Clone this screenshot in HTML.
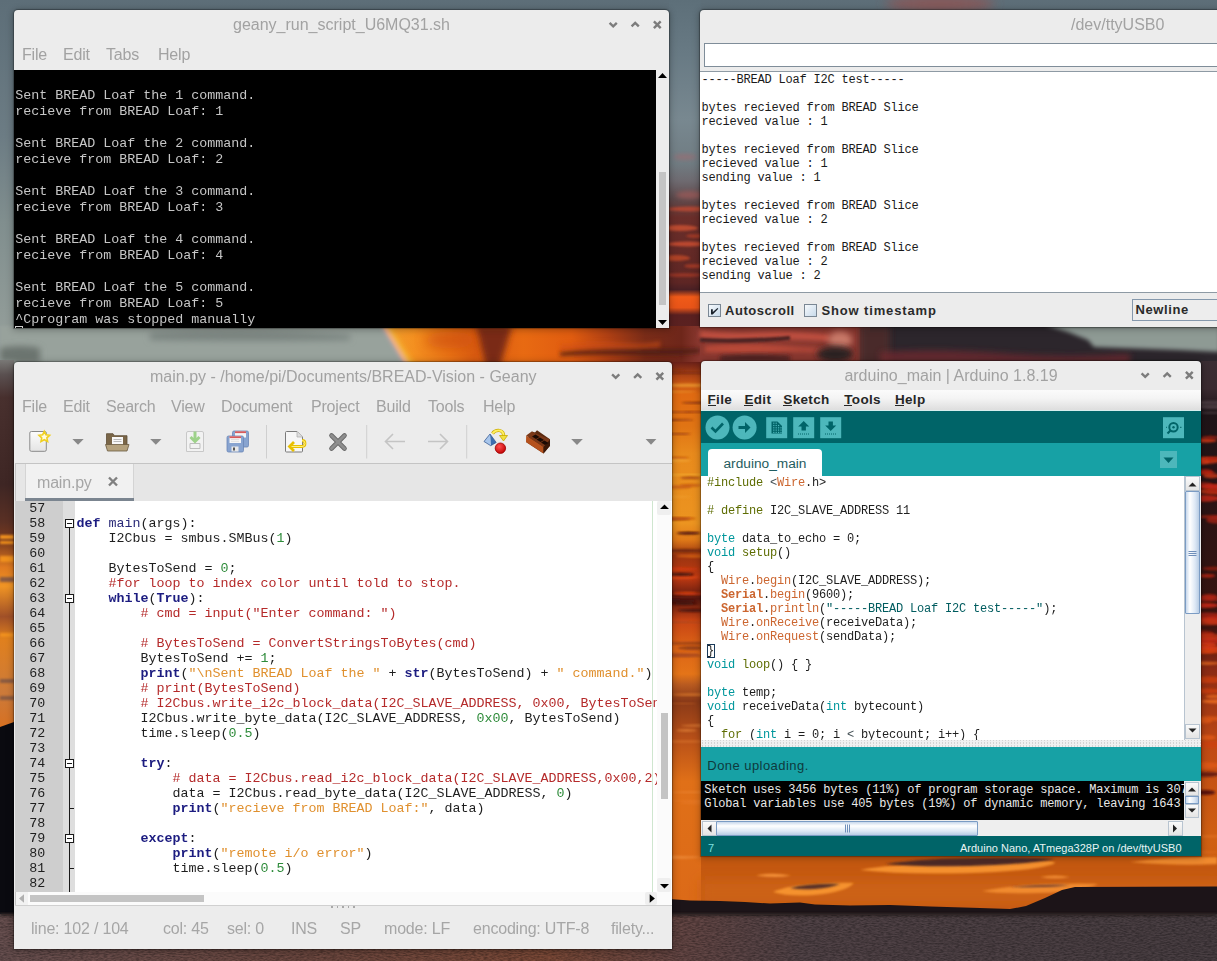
<!DOCTYPE html>
<html><head><meta charset="utf-8">
<style>
*{margin:0;padding:0;box-sizing:border-box}
html,body{width:1217px;height:961px;overflow:hidden;background:#5f6f79;position:relative;font-family:"Liberation Sans",sans-serif}
.a{position:absolute}
.t{white-space:pre}
</style></head><body>
<svg class="a" style="left:0;top:0" width="1217" height="961" viewBox="0 0 1217 961">
<defs>
<filter id="noise" x="0" y="0" width="100%" height="100%"><feTurbulence type="fractalNoise" baseFrequency="0.25 0.9" numOctaves="2" seed="3"/><feColorMatrix type="matrix" values="0 0 0 0 0  0 0 0 0 0  0 0 0 0 0  0 0 0 -1.6 1.1"/></filter>
<filter id="b1" x="-50%" y="-50%" width="200%" height="200%"><feGaussianBlur stdDeviation="1"/></filter>
<filter id="b2" x="-50%" y="-50%" width="200%" height="200%"><feGaussianBlur stdDeviation="2"/></filter>
<filter id="b3" x="-50%" y="-50%" width="200%" height="200%"><feGaussianBlur stdDeviation="3"/></filter>
<filter id="b6" x="-50%" y="-50%" width="200%" height="200%"><feGaussianBlur stdDeviation="6"/></filter>
<filter id="b12" x="-50%" y="-50%" width="200%" height="200%"><feGaussianBlur stdDeviation="12"/></filter>
<linearGradient id="skyTop" x1="0" y1="0" x2="0" y2="340" gradientUnits="userSpaceOnUse">
 <stop offset="0" stop-color="#5d6e78"/><stop offset=".4" stop-color="#6c7c84"/><stop offset=".65" stop-color="#808e8e"/><stop offset="1" stop-color="#949e9a"/>
</linearGradient>
<linearGradient id="leftS" x1="0" y1="352" x2="0" y2="730" gradientUnits="userSpaceOnUse">
 <stop offset="0" stop-color="#8a8e8a"/><stop offset=".06" stop-color="#5a5050"/><stop offset=".12" stop-color="#48302e"/>
 <stop offset=".35" stop-color="#3e2624"/><stop offset=".45" stop-color="#5a3024"/><stop offset=".5" stop-color="#7a3a1e"/>
 <stop offset=".57" stop-color="#e07a20"/><stop offset=".62" stop-color="#f09424"/><stop offset=".7" stop-color="#a05028"/>
 <stop offset=".76" stop-color="#e0801e"/><stop offset=".9" stop-color="#cc7a3a"/><stop offset="1" stop-color="#d87020"/>
</linearGradient>
<linearGradient id="gapT" x1="0" y1="0" x2="0" y2="362" gradientUnits="userSpaceOnUse">
 <stop offset="0" stop-color="#5d6f79"/><stop offset=".15" stop-color="#687a84"/><stop offset=".33" stop-color="#788890"/><stop offset=".45" stop-color="#707c82"/>
 <stop offset=".5" stop-color="#6e6a70"/><stop offset=".55" stop-color="#5e4a4c"/><stop offset=".6" stop-color="#6a2e2a"/><stop offset=".78" stop-color="#5e2624"/>
 <stop offset=".8" stop-color="#4a2024"/><stop offset=".82" stop-color="#f05a18"/><stop offset=".85" stop-color="#e85418"/>
 <stop offset=".87" stop-color="#5a2020"/><stop offset="1" stop-color="#5a2422"/>
</linearGradient>
<linearGradient id="gapB" x1="0" y1="362" x2="0" y2="900" gradientUnits="userSpaceOnUse">
 <stop offset="0" stop-color="#6a2018"/><stop offset=".03" stop-color="#b84a14"/><stop offset=".06" stop-color="#e06a12"/><stop offset=".12" stop-color="#e07414"/>
 <stop offset=".17" stop-color="#e88a1c"/><stop offset=".3" stop-color="#ec9420"/><stop offset=".33" stop-color="#e07a18"/>
 <stop offset=".36" stop-color="#9a3410"/><stop offset=".4" stop-color="#c03a12"/><stop offset=".44" stop-color="#5a1810"/>
 <stop offset=".48" stop-color="#c84414"/><stop offset=".53" stop-color="#dc6416"/><stop offset=".58" stop-color="#e47418"/>
 <stop offset=".6" stop-color="#b85a20"/><stop offset=".63" stop-color="#8a3a18"/><stop offset=".7" stop-color="#b85018"/><stop offset=".78" stop-color="#e07018"/>
 <stop offset="1" stop-color="#dc6a18"/>
</linearGradient>
<linearGradient id="rgtB" x1="0" y1="291" x2="0" y2="900" gradientUnits="userSpaceOnUse">
 <stop offset="0" stop-color="#8e9893"/><stop offset=".04" stop-color="#8a9590"/><stop offset=".07" stop-color="#3a3035"/><stop offset=".16" stop-color="#3a2a30"/>
 <stop offset=".2" stop-color="#1e1418"/><stop offset=".55" stop-color="#3a1410"/><stop offset=".62" stop-color="#8a2a14"/>
 <stop offset=".75" stop-color="#c04a14"/><stop offset=".9" stop-color="#d06012"/><stop offset="1" stop-color="#c85a14"/>
</linearGradient>
<linearGradient id="seaL" x1="0" y1="0" x2="1217" y2="0" gradientUnits="userSpaceOnUse">
 <stop offset="0" stop-color="#685050"/><stop offset=".25" stop-color="#6c4840"/><stop offset=".45" stop-color="#7c4a38"/>
 <stop offset=".56" stop-color="#644644"/><stop offset=".66" stop-color="#504246"/><stop offset="1" stop-color="#483e42"/>
</linearGradient>
<linearGradient id="stripH" x1="0" y1="0" x2="1217" y2="0" gradientUnits="userSpaceOnUse">
 <stop offset="0" stop-color="#949e9a"/><stop offset=".3" stop-color="#98a29c"/><stop offset=".315" stop-color="#f0a030"/>
 <stop offset=".34" stop-color="#f49020"/><stop offset=".37" stop-color="#e87014"/><stop offset=".39" stop-color="#d85a10"/>
 <stop offset=".43" stop-color="#e86a12"/><stop offset=".47" stop-color="#e05c10"/><stop offset=".5" stop-color="#b04014"/>
 <stop offset=".53" stop-color="#7a2c18"/><stop offset=".56" stop-color="#6e261a"/><stop offset=".575" stop-color="#8a3830"/><stop offset="1" stop-color="#2e2a2e"/>
</linearGradient>
</defs>
<rect width="1217" height="961" fill="url(#skyTop)"/>
<ellipse cx="940" cy="4" rx="55" ry="8" fill="#8a5656" filter="url(#b6)"/>
<!-- gap top -->
<rect x="669" y="0" width="32" height="362" fill="url(#gapT)"/>
<ellipse cx="690" cy="209" rx="22" ry="2.5" fill="#c04a30" opacity=".8" filter="url(#b1)"/>
<ellipse cx="680" cy="228" rx="18" ry="3" fill="#c85030" opacity=".85" filter="url(#b1)"/>
<ellipse cx="700" cy="236" rx="14" ry="2" fill="#b84028" opacity=".7" filter="url(#b1)"/>
<ellipse cx="688" cy="244" rx="20" ry="2.5" fill="#d05030" opacity=".8" filter="url(#b1)"/>
<ellipse cx="676" cy="258" rx="14" ry="3" fill="#c04828" opacity=".8" filter="url(#b1)"/>
<ellipse cx="696" cy="266" rx="12" ry="2" fill="#b84028" opacity=".7" filter="url(#b1)"/>
<ellipse cx="684" cy="275" rx="18" ry="2" fill="#a83a28" opacity=".7" filter="url(#b1)"/>
<ellipse cx="685" cy="157" rx="12" ry="3" fill="#a06a70" opacity=".6" filter="url(#b2)"/>
<ellipse cx="690" cy="195" rx="14" ry="4" fill="#a05a58" opacity=".7" filter="url(#b2)"/>
<!-- horizontal strip -->
<rect x="0" y="326" width="1217" height="40" fill="url(#stripH)"/>
<path d="M388 326 L414 366 h-30 L360 326z" fill="#f8c030" filter="url(#b3)"/>
<path d="M0 326 H383 L407 366 H0z" fill="#98a29c" filter="url(#b1)"/>
<path d="M384 326 L408 366" stroke="#e8a8a0" stroke-width="4" filter="url(#b2)"/>
<path d="M0 348 q20 -4 40 0 v14 h-40z" fill="#6c7470" filter="url(#b3)"/>
<path d="M150 333 q90 -5 200 2 v5 q-90 2 -200 0z" fill="#7a8480" filter="url(#b3)"/>
<path d="M476 326 h36 l-12 40 h-14z" fill="#7a2c12" filter="url(#b3)"/>
<ellipse cx="450" cy="340" rx="25" ry="8" fill="#c84a10" opacity=".6" filter="url(#b6)"/>
<path d="M560 352 q40 -6 80 -4 t60 0 v5 q-30 3 -60 2 t-80 1z" fill="#4a1a14" opacity=".8" filter="url(#b2)"/>
<path d="M560 345 q30 -4 60 -2 t40 -2 v6 q-30 3 -60 3 t-40 0z" fill="#d05018" opacity=".6" filter="url(#b2)"/>
<rect x="700" y="326" width="160" height="40" fill="#8a3830"/>
<path d="M700 330 q30 4 60 2 t70 3 v6 q-40 -3 -70 -1 t-60 -2z" fill="#c05040" filter="url(#b2)"/>
<path d="M705 346 q40 -4 80 0 t60 2 v6 q-40 -4 -70 -2 t-70 0z" fill="#b84838" filter="url(#b2)"/>
<path d="M700 338 q40 2 90 -2 v4 q-40 4 -90 2z" fill="#4a2222" filter="url(#b1)"/>
<path d="M720 356 q30 -3 70 0 v5 h-70z" fill="#4a2020" filter="url(#b2)"/>
<ellipse cx="840" cy="340" rx="12" ry="9" fill="#c87868" filter="url(#b3)"/>
<ellipse cx="835" cy="354" rx="18" ry="8" fill="#2a2024" filter="url(#b3)"/>
<rect x="870" y="326" width="360" height="40" fill="#2c262c"/>
<path d="M860 326 h30 v40 h-30z" fill="#4a2a2c" filter="url(#b3)"/>
<path d="M880 352 q60 -4 130 2 q60 4 120 0 v10 h-250z" fill="#7a2a30" opacity=".7" filter="url(#b3)"/>
<path d="M1045 325 H1220 V352 L1180 350 L1094 347 L1088 340 L1068 332z" fill="#8e9a94" filter="url(#b2)"/>
<!-- left strip -->
<rect x="0" y="360" width="14" height="380" fill="url(#leftS)"/>
<path d="M0 535 h14 v4 h-14z M0 541 h14 v3 h-14z M0 556 h14 v6 h-14z M0 633 h14 v4 h-14z" fill="#f0901e" filter="url(#b1)"/>
<path d="M0 577 h14 v5 h-14z M0 679 h14 v4 h-14z M0 696 h14 v4 h-14z" fill="#8a5a40" filter="url(#b1)"/>
<path d="M0 727 L14 722 V916 H0z" fill="#0a0a10"/>
<!-- gap bottom -->
<rect x="669" y="362" width="36" height="560" fill="url(#gapB)"/>
<ellipse cx="673.8" cy="391.6" rx="23.0" ry="0.8" fill="#f0a030" opacity="0.63" filter="url(#b1)"/>
<ellipse cx="698.1" cy="412.0" rx="14.3" ry="0.9" fill="#8a3010" opacity="0.62" filter="url(#b1)"/>
<ellipse cx="682.6" cy="373.2" rx="26.5" ry="0.9" fill="#7a2a10" opacity="0.79" filter="url(#b1)"/>
<ellipse cx="671.0" cy="412.1" rx="21.7" ry="0.8" fill="#7a2a10" opacity="0.61" filter="url(#b1)"/>
<ellipse cx="678.3" cy="433.8" rx="12.9" ry="0.9" fill="#8a3010" opacity="0.77" filter="url(#b1)"/>
<ellipse cx="672.3" cy="419.9" rx="21.4" ry="1.0" fill="#7a2a10" opacity="0.76" filter="url(#b1)"/>
<ellipse cx="670.9" cy="371.0" rx="14.1" ry="1.6" fill="#8a3010" opacity="0.83" filter="url(#b1)"/>
<ellipse cx="698.6" cy="402.8" rx="17.2" ry="1.1" fill="#7a2a10" opacity="0.81" filter="url(#b1)"/>
<ellipse cx="687.4" cy="385.3" rx="20.5" ry="1.8" fill="#f0a030" opacity="0.73" filter="url(#b1)"/>
<ellipse cx="671.3" cy="496.8" rx="20.2" ry="1.0" fill="#f0a030" opacity="0.65" filter="url(#b1)"/>
<ellipse cx="670.3" cy="486.6" rx="23.4" ry="1.7" fill="#f0a030" opacity="0.70" filter="url(#b1)"/>
<ellipse cx="684.9" cy="474.8" rx="25.9" ry="0.8" fill="#f5b030" opacity="0.88" filter="url(#b1)"/>
<ellipse cx="690.3" cy="485.3" rx="11.2" ry="1.6" fill="#c05010" opacity="0.69" filter="url(#b1)"/>
<ellipse cx="690.4" cy="477.8" rx="10.5" ry="1.3" fill="#9a3a10" opacity="0.78" filter="url(#b1)"/>
<ellipse cx="676.0" cy="487.0" rx="15.7" ry="1.7" fill="#c05010" opacity="0.72" filter="url(#b1)"/>
<ellipse cx="671.6" cy="519.1" rx="19.0" ry="1.4" fill="#9a3a10" opacity="0.85" filter="url(#b1)"/>
<ellipse cx="677.9" cy="518.4" rx="18.3" ry="1.2" fill="#c05010" opacity="0.89" filter="url(#b1)"/>
<ellipse cx="674.6" cy="457.8" rx="14.6" ry="1.0" fill="#c05010" opacity="0.85" filter="url(#b1)"/>
<ellipse cx="678.0" cy="460.5" rx="12.9" ry="1.4" fill="#f0a030" opacity="0.89" filter="url(#b1)"/>
<ellipse cx="685.5" cy="550.7" rx="22.4" ry="1.6" fill="#5a1a10" opacity="0.74" filter="url(#b1)"/>
<ellipse cx="699.5" cy="556.1" rx="23.6" ry="1.4" fill="#e87018" opacity="0.72" filter="url(#b1)"/>
<ellipse cx="689.3" cy="533.1" rx="11.2" ry="0.8" fill="#5a1a10" opacity="0.73" filter="url(#b1)"/>
<ellipse cx="688.2" cy="533.3" rx="12.0" ry="1.5" fill="#5a1a10" opacity="0.88" filter="url(#b1)"/>
<ellipse cx="671.3" cy="593.8" rx="14.2" ry="1.2" fill="#2a0c0c" opacity="0.89" filter="url(#b1)"/>
<ellipse cx="684.2" cy="593.1" rx="12.3" ry="1.4" fill="#e04818" opacity="0.74" filter="url(#b1)"/>
<ellipse cx="673.6" cy="577.2" rx="25.0" ry="1.7" fill="#e04818" opacity="0.85" filter="url(#b1)"/>
<ellipse cx="669.7" cy="568.9" rx="29.0" ry="1.4" fill="#d83a10" opacity="0.81" filter="url(#b1)"/>
<ellipse cx="693.3" cy="610.3" rx="16.0" ry="1.6" fill="#3a1010" opacity="0.81" filter="url(#b1)"/>
<ellipse cx="680.7" cy="574.4" rx="13.3" ry="1.7" fill="#2a0c0c" opacity="0.79" filter="url(#b1)"/>
<ellipse cx="694.2" cy="593.7" rx="25.2" ry="1.0" fill="#d83a10" opacity="0.85" filter="url(#b1)"/>
<ellipse cx="676.3" cy="600.7" rx="20.4" ry="1.2" fill="#3a1010" opacity="0.90" filter="url(#b1)"/>
<ellipse cx="684.1" cy="603.5" rx="13.9" ry="1.5" fill="#2a0c0c" opacity="0.73" filter="url(#b1)"/>
<ellipse cx="700.6" cy="694.6" rx="29.1" ry="1.2" fill="#f08a30" opacity="0.63" filter="url(#b1)"/>
<ellipse cx="679.8" cy="655.0" rx="19.7" ry="2.0" fill="#a84a20" opacity="0.85" filter="url(#b1)"/>
<ellipse cx="689.9" cy="655.8" rx="26.0" ry="0.9" fill="#a84a20" opacity="0.64" filter="url(#b1)"/>
<ellipse cx="691.8" cy="648.0" rx="14.0" ry="1.9" fill="#8a3a18" opacity="0.84" filter="url(#b1)"/>
<ellipse cx="694.6" cy="643.3" rx="29.4" ry="1.2" fill="#8a3a18" opacity="0.82" filter="url(#b1)"/>
<ellipse cx="674.1" cy="622.2" rx="29.9" ry="0.8" fill="#a84a20" opacity="0.87" filter="url(#b1)"/>
<ellipse cx="673.7" cy="857.3" rx="26.5" ry="1.5" fill="#f09040" opacity="0.68" filter="url(#b1)"/>
<ellipse cx="686.5" cy="730.4" rx="10.4" ry="1.3" fill="#f09040" opacity="0.59" filter="url(#b1)"/>
<ellipse cx="698.9" cy="802.7" rx="18.7" ry="1.4" fill="#ec8030" opacity="0.41" filter="url(#b1)"/>
<ellipse cx="685.0" cy="741.5" rx="25.3" ry="0.8" fill="#f09040" opacity="0.53" filter="url(#b1)"/>
<ellipse cx="698.1" cy="725.6" rx="17.1" ry="1.0" fill="#f09040" opacity="0.64" filter="url(#b1)"/>
<ellipse cx="695.5" cy="800.8" rx="27.6" ry="0.6" fill="#ec8030" opacity="0.56" filter="url(#b1)"/>
<ellipse cx="683.1" cy="703.6" rx="13.7" ry="0.5" fill="#ec8030" opacity="0.45" filter="url(#b1)"/>
<ellipse cx="692.2" cy="792.3" rx="21.1" ry="0.8" fill="#f09040" opacity="0.56" filter="url(#b1)"/>
<!-- right strip -->
<rect x="1201" y="361" width="20" height="530" fill="url(#rgtB)"/>
<ellipse cx="1210.0" cy="402.6" rx="19.1" ry="1.9" fill="#5a4a50" opacity="0.66" filter="url(#b1)"/>
<ellipse cx="1211.1" cy="405.6" rx="17.5" ry="1.2" fill="#4a3a40" opacity="0.65" filter="url(#b1)"/>
<ellipse cx="1215.2" cy="406.9" rx="15.6" ry="2.2" fill="#4a3a40" opacity="0.94" filter="url(#b1)"/>
<ellipse cx="1210.8" cy="412.7" rx="9.9" ry="1.0" fill="#5a4a50" opacity="0.62" filter="url(#b1)"/>
<ellipse cx="1204.9" cy="471.8" rx="8.4" ry="2.7" fill="#b02010" opacity="0.81" filter="url(#b1)"/>
<ellipse cx="1204.7" cy="473.0" rx="11.5" ry="1.5" fill="#c02814" opacity="0.76" filter="url(#b1)"/>
<ellipse cx="1217.0" cy="491.2" rx="19.9" ry="3.6" fill="#d83a18" opacity="0.69" filter="url(#b1)"/>
<ellipse cx="1209.2" cy="596.8" rx="8.4" ry="2.9" fill="#c02814" opacity="0.74" filter="url(#b1)"/>
<ellipse cx="1207.2" cy="616.2" rx="19.5" ry="3.6" fill="#c02814" opacity="0.67" filter="url(#b1)"/>
<ellipse cx="1201.8" cy="633.9" rx="12.5" ry="3.3" fill="#b02010" opacity="0.63" filter="url(#b1)"/>
<ellipse cx="1213.5" cy="568.5" rx="11.2" ry="1.7" fill="#b02010" opacity="0.61" filter="url(#b1)"/>
<ellipse cx="1215.8" cy="520.2" rx="9.6" ry="3.3" fill="#c02814" opacity="0.62" filter="url(#b1)"/>
<ellipse cx="1203.8" cy="605.3" rx="14.7" ry="2.6" fill="#c02814" opacity="0.94" filter="url(#b1)"/>
<ellipse cx="1207.7" cy="599.3" rx="12.6" ry="2.5" fill="#c02814" opacity="0.60" filter="url(#b1)"/>
<ellipse cx="1216.6" cy="620.2" rx="15.1" ry="4.0" fill="#c02814" opacity="0.67" filter="url(#b1)"/>
<ellipse cx="1214.7" cy="516.7" rx="15.7" ry="1.8" fill="#c02814" opacity="0.67" filter="url(#b1)"/>
<ellipse cx="1213.4" cy="486.8" rx="11.9" ry="2.2" fill="#c02814" opacity="0.63" filter="url(#b1)"/>
<ellipse cx="1211.2" cy="475.9" rx="8.2" ry="2.4" fill="#d83a18" opacity="0.76" filter="url(#b1)"/>
<ellipse cx="1208.7" cy="641.0" rx="14.9" ry="3.7" fill="#c02814" opacity="0.82" filter="url(#b1)"/>
<ellipse cx="1204.7" cy="498.4" rx="15.3" ry="3.3" fill="#c02814" opacity="0.86" filter="url(#b1)"/>
<ellipse cx="1204.1" cy="636.9" rx="19.4" ry="3.7" fill="#d83a18" opacity="0.63" filter="url(#b1)"/>
<ellipse cx="1202.7" cy="440.4" rx="14.1" ry="2.1" fill="#d83a18" opacity="0.85" filter="url(#b1)"/>
<ellipse cx="1214.2" cy="486.5" rx="15.2" ry="2.2" fill="#c02814" opacity="0.93" filter="url(#b1)"/>
<ellipse cx="1203.0" cy="645.0" rx="13.8" ry="3.1" fill="#d83a18" opacity="0.82" filter="url(#b1)"/>
<ellipse cx="1215.7" cy="491.6" rx="10.4" ry="1.5" fill="#b02010" opacity="0.74" filter="url(#b1)"/>
<ellipse cx="1201.7" cy="484.8" rx="11.4" ry="2.8" fill="#c02814" opacity="0.63" filter="url(#b1)"/>
<ellipse cx="1208.2" cy="460.4" rx="12.0" ry="3.3" fill="#d83a18" opacity="0.80" filter="url(#b1)"/>
<ellipse cx="1201.6" cy="460.9" rx="8.2" ry="3.8" fill="#d83a18" opacity="0.71" filter="url(#b1)"/>
<ellipse cx="1210.6" cy="437.4" rx="8.9" ry="1.7" fill="#b02010" opacity="0.71" filter="url(#b1)"/>
<ellipse cx="1202.2" cy="649.9" rx="14.6" ry="3.3" fill="#d83a18" opacity="0.86" filter="url(#b1)"/>
<ellipse cx="1216.4" cy="458.5" rx="12.1" ry="1.7" fill="#b02010" opacity="0.92" filter="url(#b1)"/>
<ellipse cx="1207.7" cy="621.6" rx="17.5" ry="3.7" fill="#d83a18" opacity="0.61" filter="url(#b1)"/>
<ellipse cx="1207.1" cy="575.7" rx="8.1" ry="1.7" fill="#c02814" opacity="0.82" filter="url(#b1)"/>
<ellipse cx="1215.1" cy="648.5" rx="16.7" ry="2.5" fill="#d83a18" opacity="0.84" filter="url(#b1)"/>
<ellipse cx="1208.4" cy="718.7" rx="14.5" ry="2.5" fill="#e05a18" opacity="0.71" filter="url(#b1)"/>
<ellipse cx="1201.4" cy="663.2" rx="19.5" ry="1.7" fill="#f07020" opacity="0.69" filter="url(#b1)"/>
<ellipse cx="1205.8" cy="651.7" rx="16.1" ry="1.9" fill="#d04010" opacity="0.86" filter="url(#b1)"/>
<ellipse cx="1215.9" cy="701.4" rx="14.0" ry="2.0" fill="#f07020" opacity="0.83" filter="url(#b1)"/>
<ellipse cx="1207.9" cy="679.8" rx="17.7" ry="3.3" fill="#d04010" opacity="0.73" filter="url(#b1)"/>
<ellipse cx="1206.1" cy="737.5" rx="9.6" ry="2.5" fill="#e05a18" opacity="0.85" filter="url(#b1)"/>
<ellipse cx="1205.4" cy="792.5" rx="10.0" ry="2.4" fill="#501010" opacity="0.92" filter="url(#b1)"/>
<ellipse cx="1207.1" cy="774.6" rx="14.2" ry="2.8" fill="#f07020" opacity="0.71" filter="url(#b1)"/>
<ellipse cx="1205.4" cy="774.3" rx="15.3" ry="2.9" fill="#501010" opacity="0.80" filter="url(#b1)"/>
<ellipse cx="1213.7" cy="696.4" rx="8.2" ry="1.8" fill="#f07020" opacity="0.67" filter="url(#b1)"/>
<ellipse cx="1205.3" cy="765.4" rx="17.4" ry="3.1" fill="#e05a18" opacity="0.76" filter="url(#b1)"/>
<ellipse cx="1211.5" cy="744.5" rx="17.7" ry="3.4" fill="#d04010" opacity="0.67" filter="url(#b1)"/>
<ellipse cx="1203.9" cy="721.3" rx="8.1" ry="2.4" fill="#e05a18" opacity="0.66" filter="url(#b1)"/>
<ellipse cx="1206.5" cy="690.9" rx="16.4" ry="2.5" fill="#d04010" opacity="0.74" filter="url(#b1)"/>
<ellipse cx="1215.5" cy="863.4" rx="9.0" ry="1.4" fill="#f08030" opacity="0.44" filter="url(#b1)"/>
<ellipse cx="1211.0" cy="836.3" rx="18.9" ry="0.9" fill="#f08030" opacity="0.54" filter="url(#b1)"/>
<ellipse cx="1204.3" cy="852.1" rx="16.7" ry="1.3" fill="#e07020" opacity="0.46" filter="url(#b1)"/>
<ellipse cx="1216.7" cy="872.0" rx="19.7" ry="1.0" fill="#f08030" opacity="0.48" filter="url(#b1)"/>
<ellipse cx="1201.3" cy="857.5" rx="14.1" ry="0.5" fill="#f08030" opacity="0.57" filter="url(#b1)"/>
<!-- bottom sky -->
<rect x="701" y="856" width="520" height="60" fill="#c45810"/>
<rect x="701" y="880" width="520" height="25" fill="#cc6214" filter="url(#b6)"/>
<path d="M756 875.5 q15 -3.5 35 0 q-15 3 -35 0z" fill="#f49038" filter="url(#b1)"/>
<path d="M773 892 q15 -7 45 -8 q25 -2 36 -1 q-8 9 -40 12 q-25 2 -41 -3z" fill="#f5922e" filter="url(#b1)"/>
<path d="M790 888 q20 -5 50 -4 q-10 4 -25 5 q-15 1 -25 -1z" fill="#5a3028" filter="url(#b1)"/>
<path d="M860 870 q30 -6 80 -6 q50 -2 90 -4 q25 0 25 3 q-10 6 -60 9 q-80 4 -135 -2z" fill="#f4902e" filter="url(#b1)"/>
<path d="M885 864 q40 -6 100 -6 q50 -1 70 1 q-20 4 -60 6 q-60 3 -110 -1z" fill="#4e2c26" filter="url(#b1)"/>
<path d="M1040 877 q15 -3 30 0 q-15 3 -30 0z" fill="#f08a30" filter="url(#b1)"/>
<path d="M982 891 q30 -6 70 -7 q30 -1 46 0 q-15 8 -60 9 q-40 1 -56 -2z" fill="#f08a2e" filter="url(#b1)"/>
<path d="M1010 887 q30 -3 60 -2 q-20 3 -60 2z" fill="#6a3a30" filter="url(#b1)"/>
<path d="M1130 862 q40 -5 87 -5 v7 q-40 2 -87 -2z" fill="#f08a2e" filter="url(#b1)"/>
<!-- mountains -->
<path d="M669 899 L690 900.5 L720 901 L745 902 L770 903.5 L800 902.5 L815 904.5 L850 905.5 L890 905 L930 906.5 L980 908 L1010 909 L1026 906 L1045 898 L1062 890 L1075 887 L1217 886.5 V915 H669z" fill="#1c1418"/>
<!-- sea -->
<rect x="0" y="914" width="1217" height="47" fill="url(#seaL)"/>
<rect x="0" y="913" width="1217" height="3" fill="#2a2024" filter="url(#b1)"/>
<rect x="0" y="915" width="1217" height="46" fill="#000" opacity=".4" filter="url(#noise)"/>
</svg>
<div class="a" style="left:14px;top:10px;width:655px;height:318px;background:#ececec;border-radius:4px 4px 0 0;box-shadow:0 0 1px 1px rgba(0,0,0,.3),0 1px 7px 1px rgba(0,0,0,.28)"></div>
<div class="a t" style="left:14px;width:655px;text-align:center;top:16px;font-size:16px;line-height:18px;color:#a2a2a2;will-change:transform">geany_run_script_U6MQ31.sh</div>
<svg class="a" style="left:0;top:0;overflow:visible" width="1" height="1">
<path d="M609.6 22.9 l3.6 3.4 l3.6 -3.4" fill="none" stroke="#7c7c7c" stroke-width="2.4"/>
<path d="M631.6 26.3 l3.6 -3.4 l3.6 3.4" fill="none" stroke="#7c7c7c" stroke-width="2.4"/>
<path d="M653.9 21.4 l6.8 6.8 M660.7 21.4 l-6.8 6.8" fill="none" stroke="#7c7c7c" stroke-width="2.4"/>
</svg>
<div class="a t" style="left:22.4px;top:45.52px;font-family:'Liberation Sans',sans-serif;font-size:16px;line-height:17.88px;color:#a2a2a2;font-weight:400;letter-spacing:-0.2px;will-change:transform">File</div>
<div class="a t" style="left:63.3px;top:45.52px;font-family:'Liberation Sans',sans-serif;font-size:16px;line-height:17.88px;color:#a2a2a2;font-weight:400;letter-spacing:-0.2px;will-change:transform">Edit</div>
<div class="a t" style="left:106.4px;top:45.52px;font-family:'Liberation Sans',sans-serif;font-size:16px;line-height:17.88px;color:#a2a2a2;font-weight:400;letter-spacing:-0.2px;will-change:transform">Tabs</div>
<div class="a t" style="left:157.6px;top:45.52px;font-family:'Liberation Sans',sans-serif;font-size:16px;line-height:17.88px;color:#a2a2a2;font-weight:400;letter-spacing:-0.2px;will-change:transform">Help</div>
<div class="a" style="left:14px;top:70px;width:642px;height:258px;background:#000;"></div>
<div class="a" style="left:656px;top:70px;width:13px;height:258px;background:#ececec;"></div>
<svg class="a" style="left:0;top:0;overflow:visible" width="1" height="1"><path d="M658 78 L662.5 73 L667 78Z M658 320 L662.5 325 L667 320Z" fill="#000"/></svg>
<div class="a" style="left:659px;top:172px;width:7px;height:133px;background:#c4c4c4;"></div>
<div class="a t" style="left:15.3px;top:87.90px;font-family:'Liberation Mono',monospace;font-size:13.333px;line-height:15.10px;color:#c6c6c6;font-weight:400;">Sent BREAD Loaf the 1 command.</div>
<div class="a t" style="left:15.3px;top:103.90px;font-family:'Liberation Mono',monospace;font-size:13.333px;line-height:15.10px;color:#c6c6c6;font-weight:400;">recieve from BREAD Loaf: 1</div>
<div class="a t" style="left:15.3px;top:135.90px;font-family:'Liberation Mono',monospace;font-size:13.333px;line-height:15.10px;color:#c6c6c6;font-weight:400;">Sent BREAD Loaf the 2 command.</div>
<div class="a t" style="left:15.3px;top:151.90px;font-family:'Liberation Mono',monospace;font-size:13.333px;line-height:15.10px;color:#c6c6c6;font-weight:400;">recieve from BREAD Loaf: 2</div>
<div class="a t" style="left:15.3px;top:183.90px;font-family:'Liberation Mono',monospace;font-size:13.333px;line-height:15.10px;color:#c6c6c6;font-weight:400;">Sent BREAD Loaf the 3 command.</div>
<div class="a t" style="left:15.3px;top:199.90px;font-family:'Liberation Mono',monospace;font-size:13.333px;line-height:15.10px;color:#c6c6c6;font-weight:400;">recieve from BREAD Loaf: 3</div>
<div class="a t" style="left:15.3px;top:231.90px;font-family:'Liberation Mono',monospace;font-size:13.333px;line-height:15.10px;color:#c6c6c6;font-weight:400;">Sent BREAD Loaf the 4 command.</div>
<div class="a t" style="left:15.3px;top:247.90px;font-family:'Liberation Mono',monospace;font-size:13.333px;line-height:15.10px;color:#c6c6c6;font-weight:400;">recieve from BREAD Loaf: 4</div>
<div class="a t" style="left:15.3px;top:279.90px;font-family:'Liberation Mono',monospace;font-size:13.333px;line-height:15.10px;color:#c6c6c6;font-weight:400;">Sent BREAD Loaf the 5 command.</div>
<div class="a t" style="left:15.3px;top:295.90px;font-family:'Liberation Mono',monospace;font-size:13.333px;line-height:15.10px;color:#c6c6c6;font-weight:400;">recieve from BREAD Loaf: 5</div>
<div class="a t" style="left:15.3px;top:311.90px;font-family:'Liberation Mono',monospace;font-size:13.333px;line-height:15.10px;color:#c6c6c6;font-weight:400;">^Cprogram was stopped manually</div>
<div class="a" style="left:15px;top:326px;width:8px;height:2px;background:transparent;border:1px solid #ccc;border-bottom:none"></div>
<div class="a" style="left:700px;top:10px;width:560px;height:317px;background:#ececec;border-radius:4px 4px 0 0;box-shadow:0 0 1px 1px rgba(0,0,0,.3),0 1px 7px 1px rgba(0,0,0,.28)"></div>
<div class="a t" style="left:1071px;top:15.52px;font-family:'Liberation Sans',sans-serif;font-size:16px;line-height:17.88px;color:#a2a2a2;font-weight:400;;will-change:transform">/dev/ttyUSB0</div>
<div class="a" style="left:704px;top:43px;width:540px;height:24px;background:#fff;border:1px solid #7f8d99;border-right:none"></div>
<div class="a" style="left:700px;top:71px;width:530px;height:1px;background:#8e9aa4;"></div>
<div class="a" style="left:700px;top:72px;width:530px;height:220px;background:#fff;"></div>
<div class="a" style="left:700px;top:292px;width:530px;height:1px;background:#8e9aa4;"></div>
<div class="a t" style="left:701.5px;top:73.51px;font-family:'Liberation Mono',monospace;font-size:12px;line-height:13.59px;color:#1a1a1a;font-weight:400;letter-spacing:-0.2px">-----BREAD Loaf I2C test-----</div>
<div class="a t" style="left:701.5px;top:101.51px;font-family:'Liberation Mono',monospace;font-size:12px;line-height:13.59px;color:#1a1a1a;font-weight:400;letter-spacing:-0.2px">bytes recieved from BREAD Slice</div>
<div class="a t" style="left:701.5px;top:115.51px;font-family:'Liberation Mono',monospace;font-size:12px;line-height:13.59px;color:#1a1a1a;font-weight:400;letter-spacing:-0.2px">recieved value : 1</div>
<div class="a t" style="left:701.5px;top:143.51px;font-family:'Liberation Mono',monospace;font-size:12px;line-height:13.59px;color:#1a1a1a;font-weight:400;letter-spacing:-0.2px">bytes recieved from BREAD Slice</div>
<div class="a t" style="left:701.5px;top:157.51px;font-family:'Liberation Mono',monospace;font-size:12px;line-height:13.59px;color:#1a1a1a;font-weight:400;letter-spacing:-0.2px">recieved value : 1</div>
<div class="a t" style="left:701.5px;top:171.51px;font-family:'Liberation Mono',monospace;font-size:12px;line-height:13.59px;color:#1a1a1a;font-weight:400;letter-spacing:-0.2px">sending value : 1</div>
<div class="a t" style="left:701.5px;top:199.51px;font-family:'Liberation Mono',monospace;font-size:12px;line-height:13.59px;color:#1a1a1a;font-weight:400;letter-spacing:-0.2px">bytes recieved from BREAD Slice</div>
<div class="a t" style="left:701.5px;top:213.51px;font-family:'Liberation Mono',monospace;font-size:12px;line-height:13.59px;color:#1a1a1a;font-weight:400;letter-spacing:-0.2px">recieved value : 2</div>
<div class="a t" style="left:701.5px;top:241.51px;font-family:'Liberation Mono',monospace;font-size:12px;line-height:13.59px;color:#1a1a1a;font-weight:400;letter-spacing:-0.2px">bytes recieved from BREAD Slice</div>
<div class="a t" style="left:701.5px;top:255.51px;font-family:'Liberation Mono',monospace;font-size:12px;line-height:13.59px;color:#1a1a1a;font-weight:400;letter-spacing:-0.2px">recieved value : 2</div>
<div class="a t" style="left:701.5px;top:269.51px;font-family:'Liberation Mono',monospace;font-size:12px;line-height:13.59px;color:#1a1a1a;font-weight:400;letter-spacing:-0.2px">sending value : 2</div>
<div class="a" style="left:708px;top:304px;width:13px;height:13px;background:linear-gradient(135deg,#f6f9fc,#c8daea);border:1px solid #7a8794"></div>
<svg class="a" style="left:708px;top:304px" width="13" height="13"><path d="M3 5.2 h1.8 v2.9 l4.7 -4.2 l.8 .9 l-5.6 5.6 h-1.7z" fill="#18202a"/></svg>
<div class="a t" style="left:725px;top:304.23px;font-family:'Liberation Sans',sans-serif;font-size:13px;line-height:14.52px;color:#2a2a2a;font-weight:700;letter-spacing:0.55px">Autoscroll</div>
<div class="a" style="left:804px;top:304px;width:13px;height:13px;background:linear-gradient(135deg,#f6f9fc,#c8daea);border:1px solid #7a8794"></div>
<div class="a t" style="left:821.5px;top:304.23px;font-family:'Liberation Sans',sans-serif;font-size:13px;line-height:14.52px;color:#2a2a2a;font-weight:700;letter-spacing:0.85px">Show timestamp</div>
<div class="a" style="left:1132px;top:299px;width:100px;height:22px;background:#ededed;border:1px solid #8598ac"></div>
<div class="a t" style="left:1135.5px;top:303.23px;font-family:'Liberation Sans',sans-serif;font-size:13px;line-height:14.52px;color:#2a2a2a;font-weight:700;letter-spacing:0.6px">Newline</div>
<div class="a" style="left:14px;top:362px;width:658px;height:587px;background:#ececec;border-radius:4px 4px 0 0;box-shadow:0 0 1px 1px rgba(0,0,0,.3),0 1px 7px 1px rgba(0,0,0,.28)"></div>
<div class="a t" style="left:150.1px;top:367.52px;font-family:'Liberation Sans',sans-serif;font-size:16px;line-height:17.88px;color:#a2a2a2;font-weight:400;;will-change:transform">main.py - /home/pi/Documents/BREAD-Vision - Geany</div>
<svg class="a" style="left:0;top:0;overflow:visible" width="1" height="1">
<path d="M612.1 374.4 l3.6 3.4 l3.6 -3.4" fill="none" stroke="#7c7c7c" stroke-width="2.4"/>
<path d="M634.1 377.8 l3.6 -3.4 l3.6 3.4" fill="none" stroke="#7c7c7c" stroke-width="2.4"/>
<path d="M656.4 372.9 l6.8 6.8 M663.2 372.9 l-6.8 6.8" fill="none" stroke="#7c7c7c" stroke-width="2.4"/>
</svg>
<div class="a t" style="left:22.3px;top:397.52px;font-family:'Liberation Sans',sans-serif;font-size:16px;line-height:17.88px;color:#a2a2a2;font-weight:400;letter-spacing:-0.2px;will-change:transform">File</div>
<div class="a t" style="left:63.4px;top:397.52px;font-family:'Liberation Sans',sans-serif;font-size:16px;line-height:17.88px;color:#a2a2a2;font-weight:400;letter-spacing:-0.2px;will-change:transform">Edit</div>
<div class="a t" style="left:106.3px;top:397.52px;font-family:'Liberation Sans',sans-serif;font-size:16px;line-height:17.88px;color:#a2a2a2;font-weight:400;letter-spacing:-0.2px;will-change:transform">Search</div>
<div class="a t" style="left:171.4px;top:397.52px;font-family:'Liberation Sans',sans-serif;font-size:16px;line-height:17.88px;color:#a2a2a2;font-weight:400;letter-spacing:-0.2px;will-change:transform">View</div>
<div class="a t" style="left:221px;top:397.52px;font-family:'Liberation Sans',sans-serif;font-size:16px;line-height:17.88px;color:#a2a2a2;font-weight:400;letter-spacing:-0.2px;will-change:transform">Document</div>
<div class="a t" style="left:310.7px;top:397.52px;font-family:'Liberation Sans',sans-serif;font-size:16px;line-height:17.88px;color:#a2a2a2;font-weight:400;letter-spacing:-0.2px;will-change:transform">Project</div>
<div class="a t" style="left:375.8px;top:397.52px;font-family:'Liberation Sans',sans-serif;font-size:16px;line-height:17.88px;color:#a2a2a2;font-weight:400;letter-spacing:-0.2px;will-change:transform">Build</div>
<div class="a t" style="left:427.7px;top:397.52px;font-family:'Liberation Sans',sans-serif;font-size:16px;line-height:17.88px;color:#a2a2a2;font-weight:400;letter-spacing:-0.2px;will-change:transform">Tools</div>
<div class="a t" style="left:482.5px;top:397.52px;font-family:'Liberation Sans',sans-serif;font-size:16px;line-height:17.88px;color:#a2a2a2;font-weight:400;letter-spacing:-0.2px;will-change:transform">Help</div>
<svg class="a" style="left:0;top:0;overflow:visible" width="1" height="1">
<defs>
<linearGradient id="pg" x1="0" y1="0" x2="0" y2="1"><stop offset="0" stop-color="#fdfdfd"/><stop offset="1" stop-color="#e4e4e4"/></linearGradient>
<radialGradient id="rc" cx=".4" cy=".35" r=".7"><stop offset="0" stop-color="#ff5050"/><stop offset="1" stop-color="#c00000"/></radialGradient>
</defs>
<!-- new -->
<rect x="29.8" y="431.5" width="16.5" height="19.8" rx="1.5" fill="url(#pg)" stroke="#8a8a8a" stroke-width="1"/>
<path d="M44.3 431.3 l1.6 3.4 3.7 .5 -2.7 2.6 .7 3.7 -3.3 -1.8 -3.3 1.8 .7 -3.7 -2.7 -2.6 3.7 -.5z" fill="#fffbe0" stroke="#f0d020" stroke-width="1.6"/>
<path d="M72.4 439 h11.3 l-5.65 5.8z" fill="#888"/>
<!-- open -->
<path d="M106.5 447 v-13.3 h6.5 l1.5 2 h12.5 v11.3z" fill="#7a6648" stroke="#5e4e36" stroke-width=".8"/>
<rect x="112" y="437" width="11" height="8" fill="#f8f8f8"/>
<path d="M113.5 439.5 h8 M113.5 441.5 h8" stroke="#aaa" stroke-width=".8"/>
<path d="M105.5 444.5 h23.5 l-2 6.5 h-19.5z" fill="#b5a27e" stroke="#6b5a40" stroke-width=".8"/>
<path d="M150.2 439 h11.3 l-5.65 5.8z" fill="#888"/>
<!-- save (disabled) -->
<path d="M186.5 433 q0 -1.5 1.5 -1.5 h14 q1.5 0 1.5 1.5 v18.5 h-17z" fill="#f2f2f2" stroke="#c8c8c8" stroke-width="1"/>
<path d="M190 443.5 h10 v5 h-10z" fill="none" stroke="#bdbdbd" stroke-width="1"/>
<path d="M195 431.5 v9 M190.5 437 l4.5 4.5 4.5 -4.5" fill="none" stroke="#9ed28a" stroke-width="3"/>
<!-- save all -->
<rect x="232.5" y="431" width="16" height="16" rx="1.5" fill="#88a4d0" stroke="#6a86b6" stroke-width=".8"/>
<rect x="235" y="431.5" width="11" height="6" fill="#f5f5f5"/><rect x="235" y="431.3" width="11" height="1.8" fill="#d85a5a"/>
<rect x="227" y="436" width="16.5" height="16" rx="1.5" fill="#88a4d0" stroke="#6a86b6" stroke-width=".8"/>
<rect x="229.5" y="436.5" width="11.5" height="6.5" fill="#f5f5f5"/><rect x="229.5" y="436.3" width="11.5" height="1.8" fill="#d85a5a"/>
<path d="M231 439.5 h8 M231 441.3 h8" stroke="#d0d0d0" stroke-width=".6"/>
<rect x="231.5" y="446.5" width="7" height="5" fill="#e8e8e8"/><rect x="233" y="447.5" width="2" height="3" fill="#555"/>
<!-- sep -->
<rect x="266" y="425" width="1" height="33.5" fill="#cfcfcf"/>
<!-- revert -->
<path d="M285.5 432.5 q0 -1 1 -1 h10.5 l5.5 5.5 v14 q0 1 -1 1 h-15 q-1 0 -1 -1z" fill="#f6f6f6" stroke="#7a7a7a" stroke-width="1"/>
<path d="M297 431.5 v5.5 h5.5" fill="#ddd" stroke="#aaa" stroke-width=".7"/>
<path d="M302 440.5 q3 0 3 3 q0 3 -3 3 h-10" fill="none" stroke="#e8c000" stroke-width="2.8"/>
<path d="M294 442 l-4.5 4.5 4.5 4.5" fill="none" stroke="#e8c000" stroke-width="2.8"/>
<path d="M302 440.5 q3 0 3 3 q0 3 -3 3 h-10" fill="none" stroke="#fff080" stroke-width="1"/>
<!-- close -->
<path d="M331.5 435.5 l13 13 M344.5 435.5 l-13 13" stroke="#666" stroke-width="4.6" stroke-linecap="round"/>
<path d="M331.5 435.5 l13 13 M344.5 435.5 l-13 13" stroke="#8e8e8e" stroke-width="3" stroke-linecap="round"/>
<rect x="366.2" y="425" width="1" height="33.5" fill="#cfcfcf"/>
<!-- back / forward -->
<path d="M405 441.5 h-19 M393 434 l-7.5 7.5 7.5 7.5" fill="none" stroke="#c4c4c4" stroke-width="1.6"/>
<path d="M428 441.5 h19 M440 434 l7.5 7.5 -7.5 7.5" fill="none" stroke="#c4c4c4" stroke-width="1.6"/>
<rect x="466.2" y="425" width="1" height="33.5" fill="#cfcfcf"/>
<!-- compile -->
<path d="M490 434 l6.2 8.5 -5.5 3.2z" fill="#3d6fb0"/><path d="M490 434 l-6 7.5 6.7 4.2z" fill="#a8c6ec"/>
<path d="M490 434 l6.2 8.5 -5.5 3.2 -6.7 -4.2z" fill="none" stroke="#2a4f8a" stroke-width=".7"/>
<path d="M492.5 433.5 q2.5 -3.5 7 -3 q4.5 .8 4 6" fill="none" stroke="#c8a800" stroke-width="3.2"/>
<path d="M492.5 433.5 q2.5 -3.5 7 -3 q4.5 .8 4 6" fill="none" stroke="#fff060" stroke-width="1.8"/>
<path d="M499.5 435.5 l4 5.5 4 -5.5z" fill="#f0e040" stroke="#c8a800" stroke-width=".8"/>
<circle cx="500.4" cy="448.2" r="5.2" fill="url(#rc)" stroke="#900" stroke-width=".8"/>
<!-- brick -->
<path d="M526 442 l6 -10.5 l3 1 l2 -2.2 l13 9 v6.5 l-6.5 7.8z" fill="#5a2a10"/>
<path d="M526 442 l17.5 11.6 l0 -6.8 l-17.3 -11.3z" fill="#b5521e"/>
<path d="M543.5 453.6 l6.5 -7.8 v-6.5 l-6.5 7.5z" fill="#3a1808"/>
<path d="M526.2 435.5 l5.5 -4 l18.3 8 l-6.5 7.5z" fill="#7a3818"/>
<path d="M532 436.5 l3.5 -2 4 2.5 -3.5 2z M536.5 439.5 l3.5 -2 4 2.5 -3.5 2z M541 442.5 l3.5 -2 4 2.5 -3.5 2z" fill="#1a0a04"/>
<path d="M571.2 439 h11.6 l-5.8 6z" fill="#888"/>
<path d="M645.6 439 h10.8 l-5.4 5.8z" fill="#888"/>
</svg>
<div class="a" style="left:15px;top:463px;width:657px;height:1px;background:#c4c4c4;"></div>
<div class="a" style="left:15px;top:464px;width:656px;height:37px;background:#e6e6e6;"></div>
<div class="a" style="left:15px;top:463px;width:1px;height:442px;background:#c4c4c4;"></div>
<div class="a" style="left:25px;top:464px;width:109px;height:37px;background:#f1f1f1;border-left:1px solid #d4d4d4;border-right:1px solid #d4d4d4"></div>
<div class="a" style="left:25px;top:498px;width:109px;height:3px;background:#7b8590;"></div>
<div class="a t" style="left:37.3px;top:473.52px;font-family:'Liberation Sans',sans-serif;font-size:16px;line-height:17.88px;color:#a6a6a6;font-weight:400;letter-spacing:-0.2px;will-change:transform">main.py</div>
<svg class="a" style="left:0;top:0;overflow:visible" width="1" height="1"><path d="M109 477.5 l8 8 M117 477.5 l-8 8" stroke="#808080" stroke-width="2.4"/></svg>
<div class="a" style="left:15px;top:501px;width:48px;height:391px;background:#cecece;"></div>
<div class="a" style="left:63px;top:501px;width:12px;height:391px;background:#dedede;"></div>
<div class="a" style="left:75px;top:501px;width:582px;height:391px;background:#ffffff;"></div>
<div class="a" style="left:652px;top:501px;width:1px;height:391px;background:#cfe6cf;"></div>
<div class="a" style="left:657px;top:501px;width:15px;height:391px;background:#fbfbfb;"></div>
<div class="a" style="left:657px;top:501px;width:14px;height:14px;background:#efefef;border-radius:2px"></div>
<div class="a" style="left:657px;top:878px;width:14px;height:14px;background:#efefef;border-radius:2px"></div>
<svg class="a" style="left:0;top:0;overflow:visible" width="1" height="1"><path d="M660 509 L664.5 504.4 L669 509Z M660 884 L664.5 888.6 L669 884Z" fill="#000"/></svg>
<div class="a" style="left:661px;top:713px;width:7px;height:86px;background:#c4c4c4;"></div>
<div class="a" style="left:68.5px;top:523px;width:1px;height:369px;background:#1a1a1a;"></div>
<div class="a" style="left:65px;top:519px;width:9px;height:9px;background:#fff;border:1px solid #1a1a1a"></div>
<div class="a" style="left:67px;top:523px;width:5px;height:1px;background:#1a1a1a;"></div>
<div class="a" style="left:65px;top:594px;width:9px;height:9px;background:#fff;border:1px solid #1a1a1a"></div>
<div class="a" style="left:67px;top:598px;width:5px;height:1px;background:#1a1a1a;"></div>
<div class="a" style="left:65px;top:759px;width:9px;height:9px;background:#fff;border:1px solid #1a1a1a"></div>
<div class="a" style="left:67px;top:763px;width:5px;height:1px;background:#1a1a1a;"></div>
<div class="a" style="left:65px;top:834px;width:9px;height:9px;background:#fff;border:1px solid #1a1a1a"></div>
<div class="a" style="left:67px;top:838px;width:5px;height:1px;background:#1a1a1a;"></div>
<div class="a" style="left:69px;top:808px;width:5px;height:1px;background:#1a1a1a;"></div>
<div class="a" style="left:69px;top:868px;width:5px;height:1px;background:#1a1a1a;"></div>
<div class="a" style="left:75px;top:501px;width:582px;height:391px;overflow:hidden">
<div class="a t" style="left:1.5px;top:14.90px;font-family:'Liberation Mono',monospace;font-size:13.333px;line-height:15.10px;color:#1e1e1e;font-weight:400;"><b style="color:#1c1c80">def</b> <span style="color:#2a2a78">main</span>(args):</div>
<div class="a t" style="left:1.5px;top:29.90px;font-family:'Liberation Mono',monospace;font-size:13.333px;line-height:15.10px;color:#1e1e1e;font-weight:400;">    I2Cbus = smbus.SMBus(<span style="color:#2e8b3a">1</span>)</div>
<div class="a t" style="left:1.5px;top:59.90px;font-family:'Liberation Mono',monospace;font-size:13.333px;line-height:15.10px;color:#1e1e1e;font-weight:400;">    BytesToSend = <span style="color:#2e8b3a">0</span>;</div>
<div class="a t" style="left:1.5px;top:74.90px;font-family:'Liberation Mono',monospace;font-size:13.333px;line-height:15.10px;color:#1e1e1e;font-weight:400;"><span style="color:#b52a2a">    #for loop to index color until told to stop.</span></div>
<div class="a t" style="left:1.5px;top:89.90px;font-family:'Liberation Mono',monospace;font-size:13.333px;line-height:15.10px;color:#1e1e1e;font-weight:400;">    <b style="color:#1c1c80">while</b>(<b style="color:#1c1c80">True</b>):</div>
<div class="a t" style="left:1.5px;top:104.90px;font-family:'Liberation Mono',monospace;font-size:13.333px;line-height:15.10px;color:#1e1e1e;font-weight:400;">        <span style="color:#b52a2a"># cmd = input(&quot;Enter command: &quot;)</span></div>
<div class="a t" style="left:1.5px;top:134.90px;font-family:'Liberation Mono',monospace;font-size:13.333px;line-height:15.10px;color:#1e1e1e;font-weight:400;">        <span style="color:#b52a2a"># BytesToSend = ConvertStringsToBytes(cmd)</span></div>
<div class="a t" style="left:1.5px;top:149.90px;font-family:'Liberation Mono',monospace;font-size:13.333px;line-height:15.10px;color:#1e1e1e;font-weight:400;">        BytesToSend += <span style="color:#2e8b3a">1</span>;</div>
<div class="a t" style="left:1.5px;top:164.90px;font-family:'Liberation Mono',monospace;font-size:13.333px;line-height:15.10px;color:#1e1e1e;font-weight:400;">        <b style="color:#1c1c80">print</b>(<span style="color:#e0902e">&quot;\nSent BREAD Loaf the &quot;</span> + <b style="color:#1c1c80">str</b>(BytesToSend) + <span style="color:#e0902e">&quot; command.&quot;</span>)</div>
<div class="a t" style="left:1.5px;top:179.90px;font-family:'Liberation Mono',monospace;font-size:13.333px;line-height:15.10px;color:#1e1e1e;font-weight:400;">        <span style="color:#b52a2a"># print(BytesToSend)</span></div>
<div class="a t" style="left:1.5px;top:194.90px;font-family:'Liberation Mono',monospace;font-size:13.333px;line-height:15.10px;color:#1e1e1e;font-weight:400;">        <span style="color:#b52a2a"># I2Cbus.write_i2c_block_data(I2C_SLAVE_ADDRESS, 0x00, BytesToSend)</span></div>
<div class="a t" style="left:1.5px;top:209.90px;font-family:'Liberation Mono',monospace;font-size:13.333px;line-height:15.10px;color:#1e1e1e;font-weight:400;">        I2Cbus.write_byte_data(I2C_SLAVE_ADDRESS, <span style="color:#2e8b3a">0x00</span>, BytesToSend)</div>
<div class="a t" style="left:1.5px;top:224.90px;font-family:'Liberation Mono',monospace;font-size:13.333px;line-height:15.10px;color:#1e1e1e;font-weight:400;">        time.sleep(<span style="color:#2e8b3a">0.5</span>)</div>
<div class="a t" style="left:1.5px;top:254.90px;font-family:'Liberation Mono',monospace;font-size:13.333px;line-height:15.10px;color:#1e1e1e;font-weight:400;">        <b style="color:#1c1c80">try</b>:</div>
<div class="a t" style="left:1.5px;top:269.90px;font-family:'Liberation Mono',monospace;font-size:13.333px;line-height:15.10px;color:#1e1e1e;font-weight:400;">            <span style="color:#b52a2a"># data = I2Cbus.read_i2c_block_data(I2C_SLAVE_ADDRESS,0x00,2)</span></div>
<div class="a t" style="left:1.5px;top:284.90px;font-family:'Liberation Mono',monospace;font-size:13.333px;line-height:15.10px;color:#1e1e1e;font-weight:400;">            data = I2Cbus.read_byte_data(I2C_SLAVE_ADDRESS, <span style="color:#2e8b3a">0</span>)</div>
<div class="a t" style="left:1.5px;top:299.90px;font-family:'Liberation Mono',monospace;font-size:13.333px;line-height:15.10px;color:#1e1e1e;font-weight:400;">            <b style="color:#1c1c80">print</b>(<span style="color:#e0902e">&quot;recieve from BREAD Loaf:&quot;</span>, data)</div>
<div class="a t" style="left:1.5px;top:329.90px;font-family:'Liberation Mono',monospace;font-size:13.333px;line-height:15.10px;color:#1e1e1e;font-weight:400;">        <b style="color:#1c1c80">except</b>:</div>
<div class="a t" style="left:1.5px;top:344.90px;font-family:'Liberation Mono',monospace;font-size:13.333px;line-height:15.10px;color:#1e1e1e;font-weight:400;">            <b style="color:#1c1c80">print</b>(<span style="color:#e0902e">&quot;remote i/o error&quot;</span>)</div>
<div class="a t" style="left:1.5px;top:359.90px;font-family:'Liberation Mono',monospace;font-size:13.333px;line-height:15.10px;color:#1e1e1e;font-weight:400;">            time.sleep(<span style="color:#2e8b3a">0.5</span>)</div>
</div>
<div class="a t" style="left:29.3px;top:500.90px;font-family:'Liberation Mono',monospace;font-size:13.333px;line-height:15.10px;color:#1e1e1e;font-weight:400;">57</div>
<div class="a t" style="left:29.3px;top:515.90px;font-family:'Liberation Mono',monospace;font-size:13.333px;line-height:15.10px;color:#1e1e1e;font-weight:400;">58</div>
<div class="a t" style="left:29.3px;top:530.90px;font-family:'Liberation Mono',monospace;font-size:13.333px;line-height:15.10px;color:#1e1e1e;font-weight:400;">59</div>
<div class="a t" style="left:29.3px;top:545.90px;font-family:'Liberation Mono',monospace;font-size:13.333px;line-height:15.10px;color:#1e1e1e;font-weight:400;">60</div>
<div class="a t" style="left:29.3px;top:560.90px;font-family:'Liberation Mono',monospace;font-size:13.333px;line-height:15.10px;color:#1e1e1e;font-weight:400;">61</div>
<div class="a t" style="left:29.3px;top:575.90px;font-family:'Liberation Mono',monospace;font-size:13.333px;line-height:15.10px;color:#1e1e1e;font-weight:400;">62</div>
<div class="a t" style="left:29.3px;top:590.90px;font-family:'Liberation Mono',monospace;font-size:13.333px;line-height:15.10px;color:#1e1e1e;font-weight:400;">63</div>
<div class="a t" style="left:29.3px;top:605.90px;font-family:'Liberation Mono',monospace;font-size:13.333px;line-height:15.10px;color:#1e1e1e;font-weight:400;">64</div>
<div class="a t" style="left:29.3px;top:620.90px;font-family:'Liberation Mono',monospace;font-size:13.333px;line-height:15.10px;color:#1e1e1e;font-weight:400;">65</div>
<div class="a t" style="left:29.3px;top:635.90px;font-family:'Liberation Mono',monospace;font-size:13.333px;line-height:15.10px;color:#1e1e1e;font-weight:400;">66</div>
<div class="a t" style="left:29.3px;top:650.90px;font-family:'Liberation Mono',monospace;font-size:13.333px;line-height:15.10px;color:#1e1e1e;font-weight:400;">67</div>
<div class="a t" style="left:29.3px;top:665.90px;font-family:'Liberation Mono',monospace;font-size:13.333px;line-height:15.10px;color:#1e1e1e;font-weight:400;">68</div>
<div class="a t" style="left:29.3px;top:680.90px;font-family:'Liberation Mono',monospace;font-size:13.333px;line-height:15.10px;color:#1e1e1e;font-weight:400;">69</div>
<div class="a t" style="left:29.3px;top:695.90px;font-family:'Liberation Mono',monospace;font-size:13.333px;line-height:15.10px;color:#1e1e1e;font-weight:400;">70</div>
<div class="a t" style="left:29.3px;top:710.90px;font-family:'Liberation Mono',monospace;font-size:13.333px;line-height:15.10px;color:#1e1e1e;font-weight:400;">71</div>
<div class="a t" style="left:29.3px;top:725.90px;font-family:'Liberation Mono',monospace;font-size:13.333px;line-height:15.10px;color:#1e1e1e;font-weight:400;">72</div>
<div class="a t" style="left:29.3px;top:740.90px;font-family:'Liberation Mono',monospace;font-size:13.333px;line-height:15.10px;color:#1e1e1e;font-weight:400;">73</div>
<div class="a t" style="left:29.3px;top:755.90px;font-family:'Liberation Mono',monospace;font-size:13.333px;line-height:15.10px;color:#1e1e1e;font-weight:400;">74</div>
<div class="a t" style="left:29.3px;top:770.90px;font-family:'Liberation Mono',monospace;font-size:13.333px;line-height:15.10px;color:#1e1e1e;font-weight:400;">75</div>
<div class="a t" style="left:29.3px;top:785.90px;font-family:'Liberation Mono',monospace;font-size:13.333px;line-height:15.10px;color:#1e1e1e;font-weight:400;">76</div>
<div class="a t" style="left:29.3px;top:800.90px;font-family:'Liberation Mono',monospace;font-size:13.333px;line-height:15.10px;color:#1e1e1e;font-weight:400;">77</div>
<div class="a t" style="left:29.3px;top:815.90px;font-family:'Liberation Mono',monospace;font-size:13.333px;line-height:15.10px;color:#1e1e1e;font-weight:400;">78</div>
<div class="a t" style="left:29.3px;top:830.90px;font-family:'Liberation Mono',monospace;font-size:13.333px;line-height:15.10px;color:#1e1e1e;font-weight:400;">79</div>
<div class="a t" style="left:29.3px;top:845.90px;font-family:'Liberation Mono',monospace;font-size:13.333px;line-height:15.10px;color:#1e1e1e;font-weight:400;">80</div>
<div class="a t" style="left:29.3px;top:860.90px;font-family:'Liberation Mono',monospace;font-size:13.333px;line-height:15.10px;color:#1e1e1e;font-weight:400;">81</div>
<div class="a t" style="left:29.3px;top:875.90px;font-family:'Liberation Mono',monospace;font-size:13.333px;line-height:15.10px;color:#1e1e1e;font-weight:400;">82</div>
<div class="a" style="left:16px;top:892px;width:656px;height:13px;background:#fbfbfb;"></div>
<div class="a" style="left:16px;top:892px;width:12px;height:13px;background:#f2f2f2;"></div>
<div class="a" style="left:645px;top:892px;width:12px;height:13px;background:#efefef;border-radius:2px"></div>
<svg class="a" style="left:0;top:0;overflow:visible" width="1" height="1"><path d="M24 894.3 L19 898.5 L24 902.7Z" fill="#b0b0b0"/><path d="M649.7 894.3 L654.9 898.5 L649.7 902.7Z" fill="#000"/></svg>
<div class="a" style="left:30px;top:895px;width:174px;height:7px;background:#c4c4c4;"></div>
<div class="a" style="left:15px;top:905px;width:657px;height:1px;background:#d0d0d0;"></div>
<div class="a" style="left:331.0px;top:906px;width:1.5px;height:1.5px;background:#a8a8a8;"></div>
<div class="a" style="left:336.5px;top:906px;width:1.5px;height:1.5px;background:#a8a8a8;"></div>
<div class="a" style="left:342.0px;top:906px;width:1.5px;height:1.5px;background:#a8a8a8;"></div>
<div class="a" style="left:347.5px;top:906px;width:1.5px;height:1.5px;background:#a8a8a8;"></div>
<div class="a" style="left:353.0px;top:906px;width:1.5px;height:1.5px;background:#a8a8a8;"></div>
<div class="a t" style="left:31px;top:919.52px;font-family:'Liberation Sans',sans-serif;font-size:16px;line-height:17.88px;color:#a6a6a6;font-weight:400;letter-spacing:-0.2px;will-change:transform">line: 102 / 104</div>
<div class="a t" style="left:163.4px;top:919.52px;font-family:'Liberation Sans',sans-serif;font-size:16px;line-height:17.88px;color:#a6a6a6;font-weight:400;letter-spacing:-0.2px;will-change:transform">col: 45</div>
<div class="a t" style="left:227.2px;top:919.52px;font-family:'Liberation Sans',sans-serif;font-size:16px;line-height:17.88px;color:#a6a6a6;font-weight:400;letter-spacing:-0.2px;will-change:transform">sel: 0</div>
<div class="a t" style="left:291.3px;top:919.52px;font-family:'Liberation Sans',sans-serif;font-size:16px;line-height:17.88px;color:#a6a6a6;font-weight:400;letter-spacing:-0.2px;will-change:transform">INS</div>
<div class="a t" style="left:340.4px;top:919.52px;font-family:'Liberation Sans',sans-serif;font-size:16px;line-height:17.88px;color:#a6a6a6;font-weight:400;letter-spacing:-0.2px;will-change:transform">SP</div>
<div class="a t" style="left:384px;top:919.52px;font-family:'Liberation Sans',sans-serif;font-size:16px;line-height:17.88px;color:#a6a6a6;font-weight:400;letter-spacing:-0.2px;will-change:transform">mode: LF</div>
<div class="a t" style="left:472.6px;top:919.52px;font-family:'Liberation Sans',sans-serif;font-size:16px;line-height:17.88px;color:#a6a6a6;font-weight:400;letter-spacing:-0.2px;will-change:transform">encoding: UTF-8</div>
<div class="a t" style="left:611px;top:919.52px;font-family:'Liberation Sans',sans-serif;font-size:16px;line-height:17.88px;color:#a6a6a6;font-weight:400;letter-spacing:-0.2px;will-change:transform">filety...</div>
<div class="a" style="left:701px;top:361px;width:500px;height:495px;background:#ececec;border-radius:4px 4px 0 0;box-shadow:0 0 1px 1px rgba(0,0,0,.3),0 1px 7px 1px rgba(0,0,0,.28)"></div>
<div class="a t" style="left:701px;width:500px;text-align:center;top:367px;font-size:16px;line-height:18px;color:#a2a2a2;will-change:transform">arduino_main | Arduino 1.8.19</div>
<svg class="a" style="left:0;top:0;overflow:visible" width="1" height="1">
<path d="M1141.6 373.4 l3.6 3.4 l3.6 -3.4" fill="none" stroke="#7c7c7c" stroke-width="2.4"/>
<path d="M1163.6 376.8 l3.6 -3.4 l3.6 3.4" fill="none" stroke="#7c7c7c" stroke-width="2.4"/>
<path d="M1185.9 371.9 l6.8 6.8 M1192.7 371.9 l-6.8 6.8" fill="none" stroke="#7c7c7c" stroke-width="2.4"/>
</svg>
<div class="a" style="left:701px;top:390px;width:500px;height:21px;background:linear-gradient(#fbfbfb,#f4f4f4 40%,#dcdcdc);"></div>
<div class="a" style="left:701px;top:410px;width:500px;height:1px;background:#d6eeee;"></div>
<div class="a t" style="left:707.5px;top:392.28px;font-family:'Liberation Sans',sans-serif;font-size:13.5px;line-height:15.08px;color:#262626;font-weight:700;letter-spacing:0.35px">File</div>
<div class="a t" style="left:744.4px;top:392.28px;font-family:'Liberation Sans',sans-serif;font-size:13.5px;line-height:15.08px;color:#262626;font-weight:700;letter-spacing:0.35px">Edit</div>
<div class="a t" style="left:783.3px;top:392.28px;font-family:'Liberation Sans',sans-serif;font-size:13.5px;line-height:15.08px;color:#262626;font-weight:700;letter-spacing:0.35px">Sketch</div>
<div class="a t" style="left:844.2px;top:392.28px;font-family:'Liberation Sans',sans-serif;font-size:13.5px;line-height:15.08px;color:#262626;font-weight:700;letter-spacing:0.35px">Tools</div>
<div class="a t" style="left:894.9px;top:392.28px;font-family:'Liberation Sans',sans-serif;font-size:13.5px;line-height:15.08px;color:#262626;font-weight:700;letter-spacing:0.35px">Help</div>
<div class="a" style="left:707.5px;top:405px;width:8.5px;height:1px;background:#262626;"></div>
<div class="a" style="left:744.4px;top:405px;width:8.600000000000023px;height:1px;background:#262626;"></div>
<div class="a" style="left:783.3px;top:405px;width:9.200000000000045px;height:1px;background:#262626;"></div>
<div class="a" style="left:844.2px;top:405px;width:8.299999999999955px;height:1px;background:#262626;"></div>
<div class="a" style="left:894.9px;top:405px;width:9.600000000000023px;height:1px;background:#262626;"></div>
<div class="a" style="left:701px;top:411px;width:500px;height:32px;background:#006468;"></div>
<svg class="a" style="left:0;top:0;overflow:visible" width="1" height="1">
<circle cx="717.5" cy="427.5" r="12" fill="#4db7bb"/>
<path d="M711.5 427.5 l4 4 l7.5 -8" fill="none" stroke="#006468" stroke-width="2.6"/>
<circle cx="744.6" cy="427.5" r="12" fill="#4db7bb"/>
<path d="M738.5 427.5 h8" stroke="#006468" stroke-width="3"/><path d="M745 422 l5.5 5.5 -5.5 5.5z" fill="#006468"/>
<rect x="766.2" y="417.2" width="21" height="21" fill="#4db7bb"/>
<path d="M771.5 421.5 h6 l4.5 4.5 v7.5 h-10.5z" fill="#006468"/>
<rect x="773.2" y="422.6" width="1.2" height="1.2" fill="#4db7bb"/><rect x="775.6" y="422.6" width="1.2" height="1.2" fill="#4db7bb"/><rect x="773.2" y="424.9" width="1.2" height="1.2" fill="#4db7bb"/><rect x="775.6" y="424.9" width="1.2" height="1.2" fill="#4db7bb"/><rect x="778.0" y="424.9" width="1.2" height="1.2" fill="#4db7bb"/><rect x="773.2" y="427.2" width="1.2" height="1.2" fill="#4db7bb"/><rect x="775.6" y="427.2" width="1.2" height="1.2" fill="#4db7bb"/><rect x="778.0" y="427.2" width="1.2" height="1.2" fill="#4db7bb"/><rect x="780.4" y="427.2" width="1.2" height="1.2" fill="#4db7bb"/><rect x="773.2" y="429.5" width="1.2" height="1.2" fill="#4db7bb"/><rect x="775.6" y="429.5" width="1.2" height="1.2" fill="#4db7bb"/><rect x="778.0" y="429.5" width="1.2" height="1.2" fill="#4db7bb"/><rect x="780.4" y="429.5" width="1.2" height="1.2" fill="#4db7bb"/><rect x="773.2" y="431.8" width="1.2" height="1.2" fill="#4db7bb"/><rect x="775.6" y="431.8" width="1.2" height="1.2" fill="#4db7bb"/><rect x="778.0" y="431.8" width="1.2" height="1.2" fill="#4db7bb"/><rect x="780.4" y="431.8" width="1.2" height="1.2" fill="#4db7bb"/>
<rect x="793.2" y="417.2" width="21" height="21" fill="#4db7bb"/>
<path d="M803.7 421 l5.5 5.5 h-3.3 v4 h-4.4 v-4 h-3.3z" fill="#006468"/>
<path d="M798 434 h12" stroke="#006468" stroke-width="1" stroke-dasharray="1 1"/>
<rect x="820.2" y="417.2" width="21" height="21" fill="#4db7bb"/>
<path d="M830.7 431 l5.5 -5.5 h-3.3 v-4 h-4.4 v4 h-3.3z" fill="#006468"/>
<path d="M825 434 h12" stroke="#006468" stroke-width="1" stroke-dasharray="1 1"/>
<rect x="1163" y="417.2" width="21" height="21" fill="#4db7bb"/>
<circle cx="1173.5" cy="427.3" r="4.2" fill="none" stroke="#006468" stroke-width="2"/>
<circle cx="1173.5" cy="427.3" r="1.2" fill="#006468"/>
<path d="M1170.5 430.5 l-3 3" stroke="#006468" stroke-width="2.2"/>
<path d="M1166 427.3 h1 M1180 427.3 h1.5" stroke="#006468" stroke-width="1"/>
</svg>
<div class="a" style="left:701px;top:443px;width:500px;height:33px;background:#17a1a5;"></div>
<div class="a" style="left:708px;top:449px;width:114px;height:27px;background:#ffffff;border-radius:4px 4px 0 0"></div>
<div class="a t" style="left:723.5px;top:455.60px;font-family:'Liberation Sans',sans-serif;font-size:13.7px;line-height:15.31px;color:#1f5c60;font-weight:400;">arduino_main</div>
<div class="a" style="left:1160px;top:451px;width:17px;height:17px;background:#4db7bb;"></div>
<svg class="a" style="left:0;top:0;overflow:visible" width="1" height="1"><path d="M1163.5 457.5 h10 l-5 5.5z" fill="#006468"/></svg>
<div class="a" style="left:701px;top:476px;width:483px;height:263.5px;background:#ffffff;"></div>
<div class="a" style="left:1184px;top:476px;width:16px;height:263.5px;background:#eeeeee;border-left:1px solid #b8c4d0"></div>
<div class="a" style="left:1185px;top:476px;width:15px;height:15px;background:linear-gradient(#fafafa,#e4e4e4);border:1px solid #b8c4d0"></div>
<div class="a" style="left:1184.5px;top:491px;width:15.5px;height:123px;background:linear-gradient(90deg,#c8d8ec,#ffffff 30%,#dde8f5 70%,#b8cce4);border:1px solid #7b9cc4;border-radius:1px"></div>
<div class="a" style="left:1185px;top:724px;width:15px;height:15px;background:linear-gradient(#fafafa,#e4e4e4);border:1px solid #b8c4d0"></div>
<svg class="a" style="left:0;top:0;overflow:visible" width="1" height="1">
<path d="M1188.5 486.5 l4 -4 4 4z M1188.5 728.5 l4 4 4 -4z" fill="#222"/>
<path d="M1188.5 551.5 h8 M1188.5 553.5 h8 M1188.5 555.5 h8" stroke="#6f8fba" stroke-width="1"/>
</svg>
<div class="a" style="left:701px;top:476px;width:483px;height:263.5px;overflow:hidden">
<div class="a t" style="left:6px;top:0.51px;font-family:'Liberation Mono',monospace;font-size:12px;line-height:13.59px;color:#1e1e1e;font-weight:400;letter-spacing:-0.2px"><span style="color:#5e6d03;">#include</span><span style="color:#1e1e1e;"> </span><span style="color:#434f54;">&lt;</span><span style="color:#cc6630;">Wire</span><span style="color:#1e1e1e;">.h&gt;</span></div>
<div class="a t" style="left:6px;top:28.51px;font-family:'Liberation Mono',monospace;font-size:12px;line-height:13.59px;color:#1e1e1e;font-weight:400;letter-spacing:-0.2px"><span style="color:#5e6d03;"># define</span><span style="color:#1e1e1e;"> I2C_SLAVE_ADDRESS 11</span></div>
<div class="a t" style="left:6px;top:56.51px;font-family:'Liberation Mono',monospace;font-size:12px;line-height:13.59px;color:#1e1e1e;font-weight:400;letter-spacing:-0.2px"><span style="color:#00979c;">byte</span><span style="color:#1e1e1e;"> data_to_echo = 0;</span></div>
<div class="a t" style="left:6px;top:70.51px;font-family:'Liberation Mono',monospace;font-size:12px;line-height:13.59px;color:#1e1e1e;font-weight:400;letter-spacing:-0.2px"><span style="color:#00979c;">void</span><span style="color:#1e1e1e;"> </span><span style="color:#5e6d03;">setup</span><span style="color:#1e1e1e;">()</span></div>
<div class="a t" style="left:6px;top:84.51px;font-family:'Liberation Mono',monospace;font-size:12px;line-height:13.59px;color:#1e1e1e;font-weight:400;letter-spacing:-0.2px"><span style="color:#1e1e1e;">{</span></div>
<div class="a t" style="left:6px;top:98.51px;font-family:'Liberation Mono',monospace;font-size:12px;line-height:13.59px;color:#1e1e1e;font-weight:400;letter-spacing:-0.2px"><span style="color:#1e1e1e;">  </span><span style="color:#cc6630;">Wire</span><span style="color:#1e1e1e;">.</span><span style="color:#cc6630;">begin</span><span style="color:#1e1e1e;">(I2C_SLAVE_ADDRESS);</span></div>
<div class="a t" style="left:6px;top:112.51px;font-family:'Liberation Mono',monospace;font-size:12px;line-height:13.59px;color:#1e1e1e;font-weight:400;letter-spacing:-0.2px"><span style="color:#1e1e1e;">  </span><span style="color:#cc6630;font-weight:700;">Serial</span><span style="color:#1e1e1e;">.</span><span style="color:#cc6630;">begin</span><span style="color:#1e1e1e;">(9600);</span></div>
<div class="a t" style="left:6px;top:126.51px;font-family:'Liberation Mono',monospace;font-size:12px;line-height:13.59px;color:#1e1e1e;font-weight:400;letter-spacing:-0.2px"><span style="color:#1e1e1e;">  </span><span style="color:#cc6630;font-weight:700;">Serial</span><span style="color:#1e1e1e;">.</span><span style="color:#cc6630;">println</span><span style="color:#1e1e1e;">(</span><span style="color:#005c5f;">&quot;-----BREAD Loaf I2C test-----&quot;</span><span style="color:#1e1e1e;">);</span></div>
<div class="a t" style="left:6px;top:140.51px;font-family:'Liberation Mono',monospace;font-size:12px;line-height:13.59px;color:#1e1e1e;font-weight:400;letter-spacing:-0.2px"><span style="color:#1e1e1e;">  </span><span style="color:#cc6630;">Wire</span><span style="color:#1e1e1e;">.</span><span style="color:#cc6630;">onReceive</span><span style="color:#1e1e1e;">(receiveData);</span></div>
<div class="a t" style="left:6px;top:154.51px;font-family:'Liberation Mono',monospace;font-size:12px;line-height:13.59px;color:#1e1e1e;font-weight:400;letter-spacing:-0.2px"><span style="color:#1e1e1e;">  </span><span style="color:#cc6630;">Wire</span><span style="color:#1e1e1e;">.</span><span style="color:#cc6630;">onRequest</span><span style="color:#1e1e1e;">(sendData);</span></div>
<div class="a t" style="left:6px;top:168.51px;font-family:'Liberation Mono',monospace;font-size:12px;line-height:13.59px;color:#1e1e1e;font-weight:400;letter-spacing:-0.2px"><span style="color:#1e1e1e;">}</span></div>
<div class="a t" style="left:6px;top:182.51px;font-family:'Liberation Mono',monospace;font-size:12px;line-height:13.59px;color:#1e1e1e;font-weight:400;letter-spacing:-0.2px"><span style="color:#00979c;">void</span><span style="color:#1e1e1e;"> </span><span style="color:#5e6d03;">loop</span><span style="color:#1e1e1e;">() { }</span></div>
<div class="a t" style="left:6px;top:210.51px;font-family:'Liberation Mono',monospace;font-size:12px;line-height:13.59px;color:#1e1e1e;font-weight:400;letter-spacing:-0.2px"><span style="color:#00979c;">byte</span><span style="color:#1e1e1e;"> temp;</span></div>
<div class="a t" style="left:6px;top:224.51px;font-family:'Liberation Mono',monospace;font-size:12px;line-height:13.59px;color:#1e1e1e;font-weight:400;letter-spacing:-0.2px"><span style="color:#00979c;">void</span><span style="color:#1e1e1e;"> receiveData(</span><span style="color:#00979c;">int</span><span style="color:#1e1e1e;"> bytecount)</span></div>
<div class="a t" style="left:6px;top:238.51px;font-family:'Liberation Mono',monospace;font-size:12px;line-height:13.59px;color:#1e1e1e;font-weight:400;letter-spacing:-0.2px"><span style="color:#1e1e1e;">{</span></div>
<div class="a t" style="left:6px;top:252.51px;font-family:'Liberation Mono',monospace;font-size:12px;line-height:13.59px;color:#1e1e1e;font-weight:400;letter-spacing:-0.2px"><span style="color:#1e1e1e;">  </span><span style="color:#5e6d03;">for</span><span style="color:#1e1e1e;"> (</span><span style="color:#00979c;">int</span><span style="color:#1e1e1e;"> i = 0; i </span><span style="color:#434f54;">&lt;</span><span style="color:#1e1e1e;"> bytecount; i++) {</span></div>
</div>
<div class="a" style="left:707px;top:644px;width:8px;height:14px;background:transparent;border:1px solid #1a3a5a"></div>
<div class="a" style="left:701px;top:739.5px;width:483px;height:7px;background:#f0f0f0;background-image:radial-gradient(circle,#b8b8b8 0.7px,transparent 0.9px);background-size:3px 3px;background-position:0 1.5px"></div>
<div class="a" style="left:1184px;top:739.5px;width:17px;height:7px;background:#f0f0f0;background-image:radial-gradient(circle,#b8b8b8 0.7px,transparent 0.9px);background-size:3px 3px;background-position:0 1.5px"></div>
<div class="a" style="left:701px;top:746.5px;width:500px;height:34.5px;background:#17a1a5;"></div>
<div class="a t" style="left:707.3px;top:759.23px;font-family:'Liberation Sans',sans-serif;font-size:13px;line-height:14.52px;color:#0e3a3d;font-weight:400;letter-spacing:0.45px">Done uploading.</div>
<div class="a" style="left:701px;top:781px;width:483px;height:39px;background:#000000;"></div>
<div class="a t" style="left:704.3px;top:783.51px;font-family:'Liberation Mono',monospace;font-size:12px;line-height:13.59px;color:#e8e8e8;font-weight:400;width:480px;overflow:hidden;letter-spacing:-0.2px">Sketch uses 3456 bytes (11%) of program storage space. Maximum is 30720 bytes.</div>
<div class="a t" style="left:704.3px;top:797.51px;font-family:'Liberation Mono',monospace;font-size:12px;line-height:13.59px;color:#e8e8e8;font-weight:400;width:480px;overflow:hidden;letter-spacing:-0.2px">Global variables use 405 bytes (19%) of dynamic memory, leaving 1643 bytes for local variables.</div>
<div class="a" style="left:1184px;top:781px;width:17px;height:39px;background:#eeeeee;"></div>
<div class="a" style="left:1185px;top:782px;width:14px;height:14px;background:linear-gradient(#fafafa,#e4e4e4);border:1px solid #b8c4d0"></div>
<div class="a" style="left:1185px;top:796px;width:14px;height:8px;background:linear-gradient(90deg,#c8d8ec,#ffffff 30%,#dde8f5 70%,#b8cce4);border:1px solid #7b9cc4"></div>
<div class="a" style="left:1185px;top:804px;width:14px;height:14px;background:linear-gradient(#fafafa,#e4e4e4);border:1px solid #b8c4d0"></div>
<svg class="a" style="left:0;top:0;overflow:visible" width="1" height="1">
<path d="M1188 791.5 l4 -4 4 4z M1188 808.5 l4 4 4 -4z" fill="#222"/>
</svg>
<div class="a" style="left:701px;top:820px;width:500px;height:16px;background:#eeeeee;"></div>
<div class="a" style="left:702px;top:821px;width:14.5px;height:15px;background:linear-gradient(#fafafa,#e4e4e4);border:1px solid #b8c4d0"></div>
<div class="a" style="left:716px;top:821px;width:262px;height:15px;background:linear-gradient(#c8d8ec,#ffffff 30%,#dde8f5 70%,#b8cce4);border:1px solid #7b9cc4;border-radius:1px"></div>
<div class="a" style="left:1167.5px;top:821px;width:15px;height:15px;background:linear-gradient(#fafafa,#e4e4e4);border:1px solid #b8c4d0"></div>
<svg class="a" style="left:0;top:0;overflow:visible" width="1" height="1">
<path d="M711.5 824.5 l-4 4 4 4z M1173 824.5 l4 4 -4 4z" fill="#222"/>
<path d="M845.5 824.5 v8 M847.5 824.5 v8 M849.5 824.5 v8" stroke="#6f8fba" stroke-width="1"/>
</svg>
<div class="a" style="left:701px;top:836px;width:500px;height:20px;background:#006468;"></div>
<div class="a t" style="left:708px;top:842.04px;font-family:'Liberation Sans',sans-serif;font-size:11px;line-height:12.29px;color:#7fe0e0;font-weight:400;">7</div>
<div class="a t" style="left:960px;top:842.04px;font-family:'Liberation Sans',sans-serif;font-size:11px;line-height:12.29px;color:#e8f4f4;font-weight:400;">Arduino Nano, ATmega328P on /dev/ttyUSB0</div>
</body></html>
